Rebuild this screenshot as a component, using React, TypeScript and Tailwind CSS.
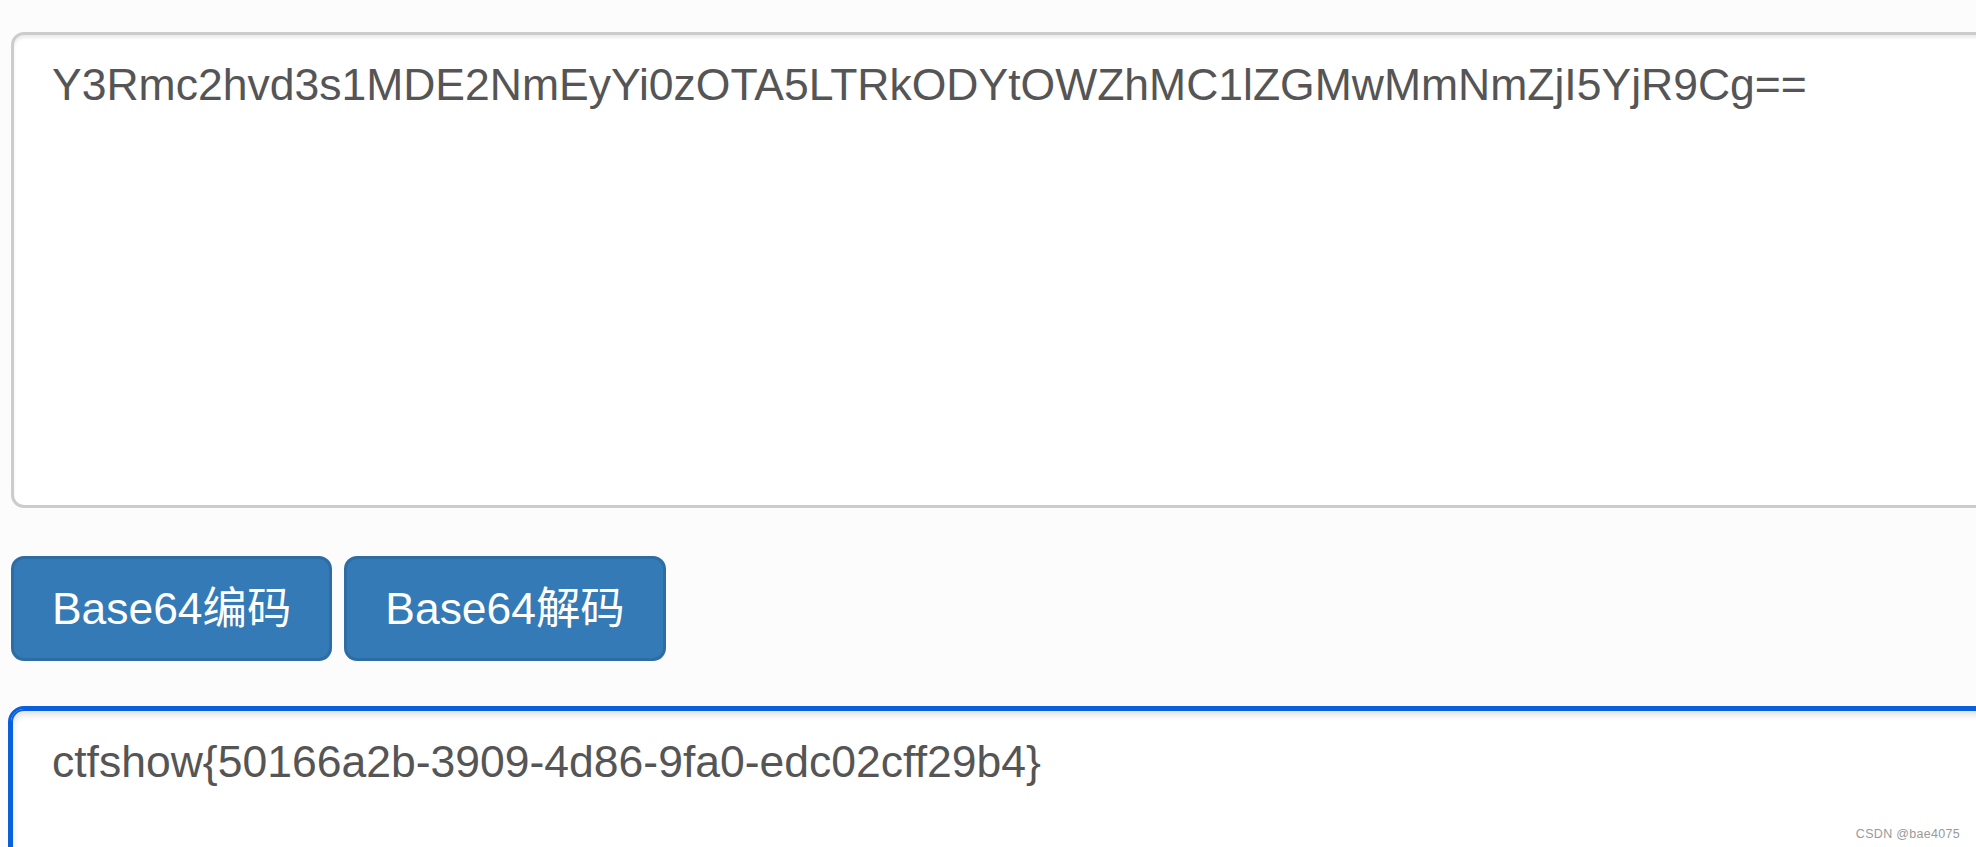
import React from "react";

export default function App() {
  return (
    <div className="relative w-full h-[847px] overflow-hidden bg-[#fcfcfc] pt-[32px] pl-[11px] font-['Liberation_Sans',Arial,'Noto_Sans_CJK_SC',sans-serif]">
      <textarea
        readOnly
        defaultValue="Y3Rmc2hvd3s1MDE2NmEyYi0zOTA5LTRkODYtOWZhMC1lZGMwMmNmZjI5YjR9Cg=="
        className="block w-[2100px] h-[476px] border-[3px] border-[#cccccc] rounded-[13px] bg-white px-[38px] pt-[18px] pb-[18px] font-['Liberation_Sans',Arial,'Noto_Sans_CJK_SC',sans-serif] text-[44.5px] leading-[63.4px] text-[#555555] shadow-[inset_0_3px_3px_rgba(0,0,0,0.075)] resize-none overflow-hidden outline-none whitespace-pre"
      />
      <div className="flex gap-[12px] mt-[48px]">
        <button className="flex items-start h-[105px] px-[38px] pt-[18px] border-[3px] border-[#2e6da4] rounded-[13px] bg-[#337ab7] text-white font-['Liberation_Sans',Arial,'Noto_Sans_CJK_SC',sans-serif] text-[44.4px] leading-[63px] whitespace-nowrap">
          Base64编码
        </button>
        <button className="flex items-start h-[105px] px-[38px] pt-[18px] border-[3px] border-[#2e6da4] rounded-[13px] bg-[#337ab7] text-white font-['Liberation_Sans',Arial,'Noto_Sans_CJK_SC',sans-serif] text-[44.4px] leading-[63px] whitespace-nowrap">
          Base64解码
        </button>
      </div>
      <textarea
        readOnly
        defaultValue="ctfshow{50166a2b-3909-4d86-9fa0-edc02cff29b4}"
        className="block mt-[48px] w-[2100px] h-[476px] border-[2px] border-[#0a60dc] rounded-[13px] bg-white px-[39px] pt-[19px] pb-[18px] font-['Liberation_Sans',Arial,'Noto_Sans_CJK_SC',sans-serif] text-[44.5px] leading-[63.4px] text-[#555555] shadow-[inset_0_4px_6px_rgba(0,0,0,0.12)] resize-none overflow-hidden outline-[3px] outline-solid outline-[#0a60dc] outline-offset-0 whitespace-pre"
      />
      <div className="absolute right-[16px] bottom-[7px] text-[12.5px] leading-none text-[#9a9a9a] tracking-[0.3px] [text-shadow:0_0_1px_#ffffff]">
        CSDN @bae4075
      </div>
    </div>
  );
}
